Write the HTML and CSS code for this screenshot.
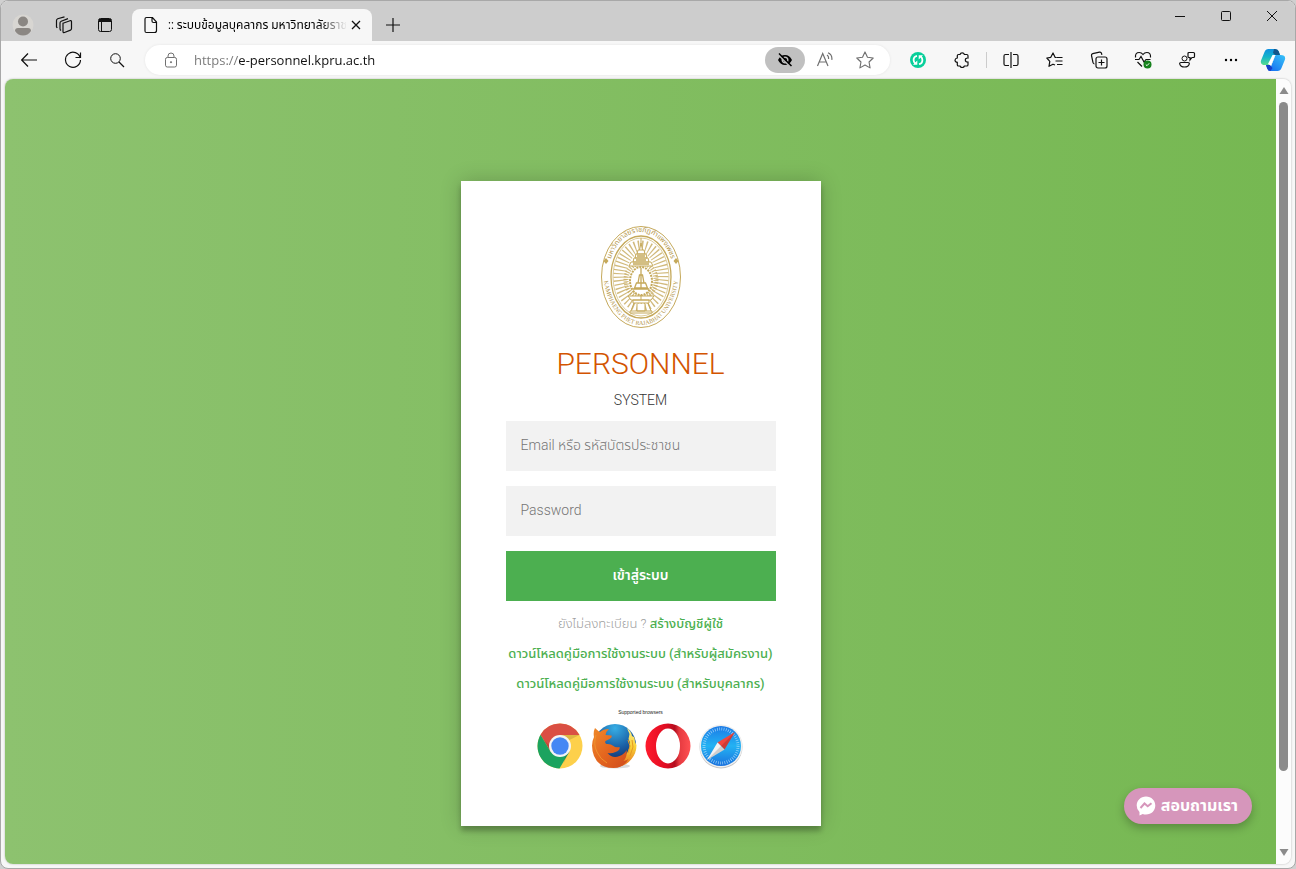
FILE: index.html
```
<!DOCTYPE html>
<html lang="th">

	<head>
		<meta charset="utf-8" />
		<title>:: ระบบข้อมูลบุคลากร</title>
		<link rel="stylesheet" href="styles.css">
	</head>

	<body>
		<div class="window">
			<!-- tab strip -->
			<div class="titlebar">
				<button class="tool" type="button" aria-label="Profile">
					<svg width="22" height="22" viewBox="0 0 22 22"><circle cx="11" cy="11" r="10.5" fill="#d8d6d2" /><circle cx="11" cy="7.500" r="5" fill="#8b8783" /><path d="M3 17q0-3 3-3h10q3 0 3 3-3 4.500-8 4.500T3 17z" fill="#8b8783" /></svg>
				</button>
				<button class="tool" type="button" aria-label="Workspaces">
					<svg class="line" width="18" height="18" viewBox="0 0 18 18"><path d="M8 7.200l7-2.500q1.500-.4 1.500 1v6.800q0 1.200-1 1.600l-6 2.400q-1.500.5-1.500-1zM5 13.500V7q0-1.300 1.200-1.800L13 2.600M5 13.500l1 1M2.300 11.800l-.8-.9V4.500q0-1.300 1.200-1.800L9.500.8" stroke-width="1.200" /></svg>
				</button>
				<button class="tool" type="button" aria-label="Tab actions">
					<svg class="line" width="16" height="16" viewBox="0 0 16 16"><rect x="1.500" y="1.500" width="13" height="13" rx="2" /><path d="M2 3.500h12" stroke-width="3" /><path d="M4.500 5v9" /></svg>
				</button>
				<div class="tab">
					<svg class="line" width="14" height="18" viewBox="0 0 14 18"><path d="M2.500 1.500h6l4 4.500v8.500q0 2-2 2h-8q-1.500 0-1.500-1.500V3q0-1.500 1.500-1.500zM8 1.500V5q0 1.500 1.500 1.500h3" stroke-width="1.200" /></svg>
					<span class="tab-title">:: ระบบข้อมูลบุคลากร มหาวิทยาลัยราช</span>
					<button class="tab-close" type="button" aria-label="Close tab">
						<svg class="line" width="10" height="10" viewBox="0 0 10 10"><path d="M1 1l8 8M9 1L1 9" stroke-width="1.300" /></svg>
					</button>
				</div>
				<button class="tool new-tab" type="button" aria-label="New tab">
					<svg class="line" width="14" height="14" viewBox="0 0 14 14"><path d="M7 0v14M0 7h14" stroke-width="1.200" /></svg>
				</button>
				<div class="controls">
					<button type="button" aria-label="Minimize"><svg class="line" width="10" height="10" viewBox="0 0 10 10"><path d="M0 5.500h10" /></svg></button>
					<button type="button" aria-label="Maximize"><svg class="line" width="10" height="10" viewBox="0 0 10 10"><rect x=".5" y=".5" width="9" height="9" rx="1" /></svg></button>
					<button type="button" aria-label="Close"><svg class="line" width="10" height="10" viewBox="0 0 10 10"><path d="M0 0l10 10M10 0L0 10" /></svg></button>
				</div>
			</div>

			<!-- toolbar -->
			<div class="toolbar">
				<button class="tool" type="button" aria-label="Back">
					<svg class="line" width="16" height="14" viewBox="0 0 16 14"><path d="M16 7H.8M7 .5L.7 7 7 13.500" stroke-width="1.200" /></svg>
				</button>
				<button class="tool" type="button" aria-label="Refresh">
					<svg class="line" width="18" height="18" viewBox="0 0 18 18"><path d="M16.300 7A7.500 7.500 0 1 0 16.500 9M16.500 1.500V6.500H11.500" stroke-width="1.200" /></svg>
				</button>
				<button class="tool" type="button" aria-label="Search">
					<svg class="line" width="16" height="16" viewBox="0 0 16 16"><circle cx="6.500" cy="6.500" r="4.800" /><path d="M10 10l5 5" stroke-width="1.200" /></svg>
				</button>
				<div class="address">
					<svg class="line grey" width="14" height="16" viewBox="0 0 14 16"><rect x="1.500" y="5.500" width="11" height="9.500" rx="1.800" /><path d="M4 5.500V4q0-3 3-3t3 3v1.500" /><circle cx="7" cy="10.200" r=".6" fill="#666" /></svg>
					<input class="url" type="text" aria-label="Address" value="https://e-personnel.kpru.ac.th">
					<button class="pill" type="button" aria-label="Hidden">
						<svg width="16" height="16" viewBox="0 0 16 16"><path d="M1 8q2.500-5 7-5t7 5q-2.500 5-7 5T1 8z" /><circle cx="8" cy="8" r="2.800" fill="none" stroke="#c0c0c0" stroke-width="1.400" /><path d="M1 2.500L13.500 15" stroke="#c0c0c0" stroke-width="1.600" /><path d="M2 1.500L14.500 14" stroke="#000" stroke-width="1.500" /></svg>
					</button>
					<button class="inner" type="button" aria-label="Read aloud">
						<svg class="line grey" width="18" height="16" viewBox="0 0 18 16"><path d="M1.500 14L6.700 1.500 12 14M3.500 10h6.500M11 3q2 1.300 1.500 4M12 .8q4.500 2 3.800 7" stroke-width="1.200" /></svg>
					</button>
					<button class="inner" type="button" aria-label="Favorite">
						<svg class="line grey" width="18" height="18" viewBox="0 0 16 16"><path d="M8 .8l2.200 4.700 5.100.7-3.700 3.600.9 5.200L8 12.500 3.500 15l.9-5.200L.7 6.200l5.100-.7z" stroke-linejoin="round" /></svg>
					</button>
				</div>
				<button class="tool" type="button" aria-label="Sync extension">
					<svg width="16" height="16" viewBox="0 0 16 16"><circle cx="8" cy="8" r="8" fill="#08cf9a" /><path d="M7 3.800Q3.600 4.500 3.600 8q0 2 1.600 3.500M9 12.200q3.400-.7 3.400-4.200 0-2-1.600-3.500" fill="none" stroke="#fff" stroke-width="1.800" /><path d="M7.300 8.500v4.300H3zM8.700 7.500V3.200H13z" fill="#fff" /></svg>
				</button>
				<button class="tool" type="button" aria-label="Extensions">
					<svg class="line" width="16" height="16" viewBox="0 0 16 16"><path d="M4.500 2.500H6Q6.500.8 8.200.8t2.200 1.700h2.300q1.300 0 1.300 1.300V6q-2.700-.2-2.700 2t2.700 2.200v2.500q0 1.300-1.300 1.300h-2.300q-.5 1.500-2.200 1.500T6 14H4.500q-1.200 0-1.200-1.300v-2.400Q1 10 1 8.200T3.300 6V3.800q0-1.300 1.200-1.300z" stroke-width="1.200" /></svg>
				</button>
				<span class="divider"></span>
				<button class="tool" type="button" aria-label="Split screen">
					<svg class="line" width="16" height="16" viewBox="0 0 16 16"><path d="M6 2.500H2.500Q1 2.500 1 4v8q0 1.500 1.500 1.500H6M10 2.500h3.500Q15 2.500 15 4v8q0 1.500-1.500 1.500H10M8 0v16" stroke-width="1.200" /></svg>
				</button>
				<button class="tool" type="button" aria-label="Favorites">
					<svg class="line" width="18" height="16" viewBox="0 0 18 16"><path d="M10.800 5.500H9.200L7 1 4.800 5.300l-4 .7 3 3.300-.8 5 4-2.100 2 .8M11 5.500h5.500M9.500 9h7M11 12.500h5.500" stroke-linejoin="round" stroke-width="1.200" /></svg>
				</button>
				<button class="tool" type="button" aria-label="Collections">
					<svg class="line" width="18" height="18" viewBox="0 0 18 18"><rect x="6" y="6" width="11" height="11" rx="2" stroke-width="1.200" /><path d="M11.500 8.500v6M8.500 11.500h6M4.500 13q-1.300-.2-1.500-1.500l-1.500-7Q1.200 3 2.700 2.600l6.800-1.500q1.500-.3 2 1.200l.4 1.500" stroke-width="1.200" /></svg>
				</button>
				<button class="tool" type="button" aria-label="Browser essentials">
					<svg class="line" width="18" height="18" viewBox="0 0 18 18"><path d="M1.500 6.500Q1 1.500 5.200 1.500 7.500 1.500 9 3.500q1.500-2 3.800-2 4.200 0 3.700 5M1 8.500h4l2-3 3 5.500 2-2.500h4.500M3.500 11L8 15.500" stroke-width="1.200" /><circle cx="13.500" cy="13.500" r="4" fill="#16811c" stroke="none" /><path d="M11.800 13.500l1.200 1.200 2.200-2.400" stroke="#fff" /></svg>
				</button>
				<button class="tool" type="button" aria-label="Feedback">
					<svg class="line" width="18" height="18" viewBox="0 0 18 18"><circle cx="6.500" cy="7.500" r="2.500" /><path d="M3 11.500h7q1.500 0 1.300 1.300Q10.500 16 6.500 16T1.700 12.800Q1.500 11.500 3 11.500zM11 1.500h4.500q1 0 1 1v3q0 1-1 1H14L12 9V6.500h-1q-1 0-1-1v-3q0-1 1-1z" stroke-width="1.200" /></svg>
				</button>
				<button class="tool" type="button" aria-label="More">
					<svg width="14" height="4" viewBox="0 0 14 4"><circle cx="2" cy="2" r="1.200" /><circle cx="7" cy="2" r="1.200" /><circle cx="12" cy="2" r="1.200" /></svg>
				</button>
				<button class="copilot" type="button" aria-label="Copilot">
					<svg width="26" height="24" viewBox="0 0 26 24">
						<defs>
							<linearGradient id="cpA" x1="0" y1="0" x2="0" y2="1"><stop offset="0" stop-color="#0e8fe0" /><stop offset=".5" stop-color="#13b5c9" /><stop offset="1" stop-color="#58dc8c" /></linearGradient>
							<linearGradient id="cpB" x1="1" y1="0" x2="0" y2="1"><stop offset="0" stop-color="#37c3f7" /><stop offset="1" stop-color="#1264f0" /></linearGradient>
						</defs>
						<path d="M8.500 1H15q3 0 3.800 2.500L20 7h-4.500L11 17H5q-5 0-4-4.500L4.500 4Q5.500 1 8.500 1z" fill="url(#cpA)" />
						<path d="M14 1h1q3 0 3.800 2.500L20 7h-5l-2-2z" fill="#12568a" />
						<path d="M20 7h.5q5.500 0 4.500 4.500L21.500 20q-1 3-4 3h-7q-2.500 0-3.300-2.500L6 17h3.500l1.500 1.500L15.500 7z" fill="url(#cpB)" />
						<path d="M15.500 7L11 17.500 9.500 17 8 16l4.500-9z" fill="#fff" />
						<path d="M6 17h4l2.500 3-2 3q-2.500 0-3.300-2.500z" fill="#1540c8" />
					</svg>
				</button>
			</div>

			<!-- web page -->
			<div class="viewport">
				<main class="login-page">
					<form class="form">
						<svg class="logo" width="82" height="103" viewBox="0 1 82 103">
							<defs>
								<path id="arcTop" d="M8.500 50A32.500 43 0 0 1 73.500 50" />
								<path id="arcBottom" d="M3.500 46A37.500 54 0 0 0 78.500 46" />
							</defs>
							<g fill="none" stroke="#c5a95b">
								<ellipse cx="41" cy="52" rx="39.500" ry="50.500" />
								<ellipse cx="41" cy="52" rx="30" ry="41" stroke-width="1.300" />
								<ellipse cx="41" cy="52" rx="28" ry="39" stroke-width=".6" />
								<ellipse cx="41" cy="51" rx="21" ry="29" stroke-width="13" stroke-dasharray="1.200 2.300" stroke-opacity=".8" />
								<ellipse cx="41" cy="55" rx="15" ry="17" stroke-width="5" stroke-dasharray="1.200 1.300" stroke-opacity=".8" />
								<path d="M41 13v8M39.500 25l1.500-7 1.500 7M38 25h6l1 4h-8zM36 29h10l1 4H35zM34 33h14l1 4H33zM31 37h20l2 4H29z" fill="#fff" />
								<path d="M37 31h8M36 35h10M33 39h16" stroke-width="1.300" />
								<ellipse cx="41" cy="56" rx="11" ry="14" fill="#fff" stroke-width="2" stroke-dasharray="2 1" />
								<path d="M41 43v6M39.500 50h3l1.500 8h-6zM36.500 58h9l2 5h-13zM33 64h16M41 46v18" stroke-width="1.300" />
								<path d="M28 71h26l-3 4H31zM33 75h16v3H33zM34 78l-3 8M48 78l3 8M30 86h22v2H30zM37 79v7h8v-7M41 71v4" fill="#fff" />
							</g>
							<path d="M6 33l2.500 3L6 39l-2.500-3zM76 33l2.500 3-2.500 3-2.500-3z" fill="#c5a95b" />
							<text class="seal-thai"><textPath href="#arcTop" startOffset="50%" text-anchor="middle">มหาวิทยาลัยราชภัฏกำแพงเพชร</textPath></text>
							<text class="seal-latin"><textPath href="#arcBottom" startOffset="50%" text-anchor="middle">KAMPHAENG PHET RAJABHAT UNIVERSITY</textPath></text>
						</svg>
						<h1>PERSONNEL</h1>
						<p class="subtitle">SYSTEM</p>
						<input type="text" aria-label="Email" placeholder="Email หรือ รหัสบัตรประชาชน">
						<input type="password" aria-label="Password" placeholder="Password">
						<button class="submit" type="button">เข้าสู่ระบบ</button>
						<p class="message">ยังไม่ลงทะเบียน ? <a href="#">สร้างบัญชีผู้ใช้</a></p>
						<p class="message"><a href="#">ดาวน์โหลดคู่มือการใช้งานระบบ (สำหรับผู้สมัครงาน)</a></p>
						<p class="message"><a href="#">ดาวน์โหลดคู่มือการใช้งานระบบ (สำหรับบุคลากร)</a></p>
						<p class="supported">Supported browsers</p>
						<div class="browsers">
							<!-- chrome -->
							<svg width="46" height="46" viewBox="0 0 46 46">
								<circle cx="23" cy="23" r="22.500" fill="#fdd04b" />
								<path d="M3.500 11.800A22.500 22.500 0 0 1 42.500 12H23L13.500 28.500z" fill="#da4f43" />
								<path d="M3.500 11.800A22.500 22.500 0 0 0 22.500 45.500L32.500 28.500 23 33 13.500 28.500z" fill="#1ba35f" />
								<path d="M23 12h19.500l-10 5zM13.500 28.500l-7-12 6 6zM32.500 28.500l-6 12 2-9z" fill="#000" opacity=".12" />
								<circle cx="23" cy="23" r="11" fill="#f4f4f4" /><circle cx="23" cy="23" r="8.700" fill="#4587f4" />
							</svg>
							<!-- firefox -->
							<svg width="46" height="46" viewBox="0 0 46 46">
								<defs>
									<radialGradient id="globe" cx=".5" cy=".1" r=".8"><stop offset="0" stop-color="#37aee5" /><stop offset=".6" stop-color="#195da3" /><stop offset="1" stop-color="#152e66" /></radialGradient>
									<linearGradient id="fox" x1="0" y1="0" x2="1" y2="1"><stop offset="0" stop-color="#ef8a2a" /><stop offset=".5" stop-color="#e4661f" /><stop offset="1" stop-color="#cf4a1d" /></linearGradient>
									<linearGradient id="tail" x1="0" y1="0" x2="0" y2="1"><stop offset="0" stop-color="#fff08a" /><stop offset=".5" stop-color="#f8cf35" /><stop offset="1" stop-color="#e8701f" /></linearGradient>
								</defs>
								<ellipse cx="24" cy="43" rx="15" ry="2.500" fill="#000" opacity=".15" />
								<circle cx="24" cy="22" r="21" fill="url(#globe)" />
								<path d="M36 5q4 3 5 8l2 1q1 2 1 5l1.500 3q0 8-5 14-6 8-17 8l4-9q8-2 10-8 3-6 0-11l1-5z" fill="url(#tail)" />
								<path d="M37 17l2 6-2 7M41 17l1 7-3 9" fill="none" stroke="#e59a22" />
								<path d="M4 5q3 3 5 4 3-3 9-3-3.500 3-3.500 6l6 .5q1 2-2 3.500l-4 2q-1 2 1 3 4-.5 7 2 2 2 6 1 1 3-4 5-4 2-8 1 5 6 12 3 5-2 7-6 1 7-3 11 3-.5 5-2-5 9-15 9Q8 45 3 33-1 22 3 14 2 9 4 5z" fill="url(#fox)" />
								<path d="M5 12q-3 9 1 17 3 7 10 11" fill="none" stroke="#f0922e" />
							</svg>
							<!-- opera -->
							<svg width="46" height="46" viewBox="0 0 46 46">
								<defs><linearGradient id="opera" x1="0" y1="0" x2="1" y2="0"><stop offset="0" stop-color="#ff1b2d" /><stop offset=".45" stop-color="#e00c22" /><stop offset=".65" stop-color="#b40d1e" /><stop offset=".75" stop-color="#e63a40" /><stop offset="1" stop-color="#ff5052" /></linearGradient></defs>
								<path fill-rule="evenodd" fill="url(#opera)" d="M23 .5a22.500 22.500 0 1 0 0 45 22.500 22.500 0 0 0 0-45zM23 5.500a12 17.500 0 1 1 0 35 12 17.500 0 0 1 0-35z" />
							</svg>
							<!-- safari -->
							<svg width="46" height="46" viewBox="0 0 46 46">
								<defs><linearGradient id="safari" x1="0" y1="0" x2="0" y2="1"><stop offset="0" stop-color="#1b7ae6" /><stop offset=".5" stop-color="#23b2f3" /><stop offset="1" stop-color="#1a72de" /></linearGradient></defs>
								<circle cx="22" cy="24" r="21.500" fill="#c4c4c4" /><circle cx="22" cy="23" r="21.500" fill="#f0f0f0" />
								<circle cx="22" cy="23" r="20" fill="url(#safari)" />
								<circle cx="22" cy="23" r="17" fill="none" stroke="#d4efff" stroke-width="3" stroke-opacity=".7" stroke-dasharray=".7 1.525" />
								<path d="M36 9L18.500 19.500 25.500 26.500z" fill="#f0463f" /><path d="M8 37L18.500 19.500 25.500 26.500z" fill="#f3f3f3" /><path d="M36 9L22 23l3.500 3.500zM8 37l14-14 3.500 3.500z" fill="#000" opacity=".15" />
							</svg>
						</div>
					</form>
				</main>
				<div class="scrollbar">
					<svg width="10" height="8" viewBox="0 0 10 8"><path d="M5 0l4.500 7h-9z" /></svg>
					<span class="thumb"></span>
					<svg class="down" width="10" height="8" viewBox="0 0 10 8"><path d="M5 8l4.500-7h-9z" /></svg>
				</div>
				<button class="chat" type="button">
					<svg width="20" height="20" viewBox="0 0 20 20"><path d="M10 .5C4.500.5.7 4.500.7 9.500q0 4 2.800 6.500v3.500L6.700 18q1.500.5 3.300.5c5.500 0 9.300-4 9.300-9S15.500.5 10 .5z" fill="#fff" /><path d="M4.500 12l4-4.500 3.200 2.700 3.800-3" fill="none" stroke="#d696bb" stroke-width="2" /></svg>
					สอบถามเรา
				</button>
			</div>
		</div>
	</body>

</html>
```
FILE: styles.css
```
* {
	box-sizing: border-box;
	margin: 0;
	padding: 0;
}

body {
	background: #d0d0d0;
	font-family: Roboto, "Noto Sans Thai", "Noto Sans", sans-serif;
}

button {
	border: 0;
	background: none;
	font-family: inherit;
	cursor: pointer;
}

.window {
	display: flex;
	flex-direction: column;
	height: 100vh;
	border: 1px solid #a8a8a8;
	border-radius: 8px;
	background: #f7f7f7;
	overflow: hidden;
}

.line {
	fill: none;
	stroke: #111;
}

.grey {
	stroke: #707070;
}

/* tab strip */
.titlebar {
	display: flex;
	align-items: flex-end;
	height: 40px;
	padding-left: 1px;
	background: #cdcdcd;
}

.tool {
	display: flex;
	align-items: center;
	justify-content: center;
	width: 44px;
	height: 32px;
}

.titlebar .tool {
	width: 41px;
}

.tab {
	display: flex;
	align-items: center;
	gap: 3px;
	width: 240px;
	height: 32px;
	margin-left: 7px;
	padding: 0 10px 0 12px;
	border-radius: 8px 8px 0 0;
	background: #f7f7f7;
}

.tab svg {
	flex: none;
}

.tab-title {
	flex: 1;
	padding-left: 7px;
	font-size: 12px;
	line-height: 20px;
	white-space: nowrap;
	-webkit-mask-image: linear-gradient(90deg, #000 85%, transparent);
}

.tab-close {
	display: flex;
	padding: 1px;
}

.controls {
	display: flex;
	align-self: flex-start;
	margin-left: auto;
}

.controls button {
	width: 46px;
	height: 30px;
}

/* toolbar */
.toolbar {
	display: flex;
	align-items: center;
	height: 38px;
	padding: 0 2px 0 6px;
}

.address {
	display: flex;
	flex: 1;
	align-items: center;
	height: 30px;
	margin: 0 6px;
	padding: 0 5px 0 19px;
	border-radius: 15px;
	background: #fff;
	box-shadow: 0 0 3px rgba(0, 0, 0, .08);
}

.url {
	flex: 1;
	min-width: 0;
	margin-left: 16px;
	border: 0;
	outline: 0;
	font: 13px/20px "Open Sans", sans-serif;
	color: transparent;
	/* the scheme is greyed out, the host is not */
	background: linear-gradient(90deg, #767676 44px, #111 44px);
	-webkit-background-clip: text;
	background-clip: text;
}

.pill {
	display: flex;
	align-items: center;
	justify-content: center;
	width: 40px;
	height: 26px;
	border-radius: 13px;
	background: #c0c0c0;
}

.inner {
	display: flex;
	align-items: center;
	justify-content: center;
	width: 40px;
	height: 26px;
}

.divider {
	width: 1px;
	height: 16px;
	margin: 0 2px;
	background: #ccc;
}

.copilot {
	display: flex;
	justify-content: center;
	width: 40px;
}

/* web page */
.viewport {
	position: relative;
	display: flex;
	flex: 1;
	min-height: 0;
	margin: 0 4px 4px;
	border-radius: 8px;
	box-shadow: 0 0 2px rgba(0, 0, 0, .3);
	overflow: hidden;
}

.login-page {
	flex: 1;
	padding-top: 102px;
	background: linear-gradient(to left, #76b852, #8dc26f);
}

.form {
	max-width: 360px;
	margin: 0 auto;
	padding: 45px;
	background: #fff;
	text-align: center;
	box-shadow: 0 0 20px rgba(0, 0, 0, .2), 0 5px 5px rgba(0, 0, 0, .24);
}

.logo {
	display: block;
	margin: 0 auto 13px;
}

.seal-thai,
.seal-latin {
	fill: #b3954a;
	font-size: 7px;
}

.seal-latin {
	font-family: "Liberation Serif", serif;
	font-size: 6px;
}

.form h1 {
	font-size: 30px;
	font-weight: 300;
	line-height: 44px;
	color: #d35400;
}

.subtitle {
	margin: 4px 0 11px;
	font-size: 14px;
	font-weight: 300;
	line-height: 20px;
	color: #333;
}

.form input,
.submit {
	display: block;
	width: 100%;
	height: 50px;
	padding: 0 15px 2px;
	border: 0;
	font-family: inherit;
	font-size: 14px;
	font-weight: 300;
}

.form input {
	margin-bottom: 15px;
	background: #f2f2f2;
}

.submit {
	background: #4caf50;
	color: #fff;
	font-weight: 600;
}

.message {
	margin-top: 10px;
	font-size: 13px;
	font-weight: 300;
	line-height: 20px;
	color: #a0a0a0;
	white-space: nowrap;
}

.submit + .message {
	margin-top: 13px;
}

.message a {
	color: #4caf50;
	font-weight: 500;
	text-decoration: none;
}

.supported {
	margin-top: 14px;
	font: 5px/8px "Liberation Sans", sans-serif;
	color: #222;
}

.browsers {
	display: flex;
	justify-content: center;
	gap: 8px;
	margin-top: 7px;
	padding-bottom: 12px;
}

.scrollbar {
	display: flex;
	flex-direction: column;
	align-items: center;
	width: 15px;
	padding: 8px 0;
	background: #fcfcfc;
	fill: #8b8b8b;
}

.thumb {
	width: 9px;
	height: 87%;
	margin-top: 7px;
	border-radius: 5px;
	background: #8b8b8b;
}

.scrollbar .down {
	margin-top: auto;
}

/* floats over the page */
.chat {
	position: absolute;
	right: 39px;
	bottom: 40px;
	display: flex;
	align-items: center;
	gap: 5px;
	height: 36px;
	padding: 0 14px 0 12px;
	border-radius: 18px;
	background: #d696bb;
	color: #fff;
	font-size: 16px;
	font-weight: bold;
	box-shadow: 0 4px 10px rgba(0, 0, 0, .25);
}
```
